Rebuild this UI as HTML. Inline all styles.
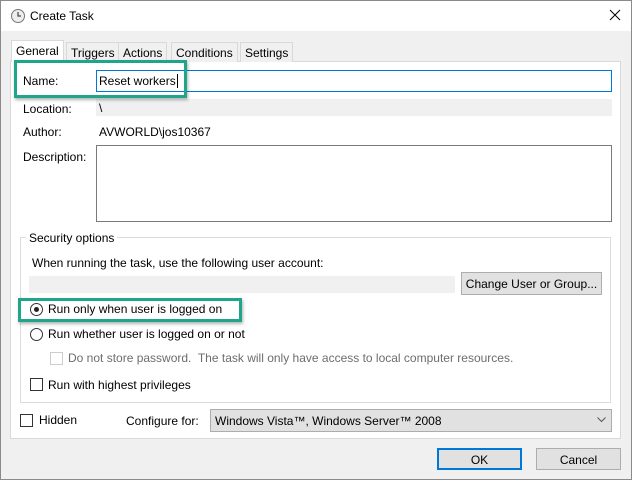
<!DOCTYPE html>
<html><head><style>
*{box-sizing:border-box;margin:0;padding:0}
body{width:632px;height:480px;overflow:hidden;font-family:"Liberation Sans",sans-serif;font-size:12px;color:#000;background:#f0f0f0;position:relative}
.a{position:absolute}
.win{left:0;top:0;width:632px;height:480px;border:1px solid #8a8a8a}
.title{left:1px;top:1px;width:630px;height:30px;background:#fff}
.panel{left:10px;top:61px;width:611px;height:378px;background:#fff;border:1px solid #d9d9d9}
.tab{top:42px;height:20px;border:1px solid #d9d9d9;border-bottom:none;background:#f0f0f0;padding:3px 4px 0;font-size:12px}
.btn{background:#e1e1e1;border:1px solid #adadad;text-align:center;font-size:12px}
.lbl{font-size:12px}
.radio{width:13px;height:13px;border:1px solid #333;border-radius:50%;background:#fff}
.chk{width:13px;height:13px;border:1px solid #333;background:#fff}
.green{border:3px solid #1fa58a;box-shadow:1px 2px 3px rgba(0,0,0,.3)}
</style></head><body>
<div class="a win"></div>
<div class="a title"></div>
<svg class="a" style="left:10px;top:8px" width="16" height="16" viewBox="0 0 16 16"><circle cx="8" cy="8" r="6.5" fill="#eee" stroke="#777"/><path d="M8 4V8H11" stroke="#444" stroke-width="1.2" fill="none"/></svg>
<div class="a" style="left:30px;top:9px;font-size:12px">Create Task</div>
<svg class="a" style="left:609px;top:9px" width="12" height="12"><path d="M1 1L11 11M11 1L1 11" stroke="#000" stroke-width="1"/></svg>

<div class="a panel"></div>
<div class="a tab" style="left:11px;top:40px;height:22px;background:#fff;border-color:#d9d9d9">General</div>
<div class="a tab" style="left:66px">Triggers</div>
<div class="a tab" style="left:118px">Actions</div>
<div class="a tab" style="left:171px">Conditions</div>
<div class="a tab" style="left:240px">Settings</div>
<div class="a" style="left:12px;top:61px;width:52px;height:2px;background:#fff"></div>

<div class="a lbl" style="left:23px;top:74px">Name:</div>
<div class="a" style="left:96px;top:70px;width:516px;height:22px;border:1px solid #0078d7;padding:3px 2px">Reset workers<span style="border-left:1px solid #000;margin-left:1px"></span></div>
<div class="a lbl" style="left:23px;top:102px">Location:</div>
<div class="a" style="left:96px;top:99px;width:516px;height:17px;background:#f0f0f0"></div>
<div class="a lbl" style="left:99px;top:101px">\</div>
<div class="a lbl" style="left:23px;top:125px">Author:</div>
<div class="a lbl" style="left:99px;top:125px">AVWORLD\jos10367</div>
<div class="a lbl" style="left:23px;top:150px">Description:</div>
<div class="a" style="left:96px;top:145px;width:516px;height:77px;border:1px solid #7a7a7a"></div>

<div class="a" style="left:20px;top:237px;width:591px;height:166px;border:1px solid #dcdcdc"></div>
<div class="a lbl" style="left:26px;top:231px;background:#fff;padding:0 3px">Security options</div>
<div class="a lbl" style="left:32px;top:256px">When running the task, use the following user account:</div>
<div class="a" style="left:29px;top:276px;width:426px;height:17px;background:#f0f0f0"></div>
<div class="a btn" style="left:461px;top:272px;width:141px;height:23px;padding-top:4px">Change User or Group...</div>

<div class="a radio" style="left:30px;top:303px"></div><div class="a" style="left:34px;top:307px;width:5px;height:5px;border-radius:50%;background:#222"></div>
<div class="a lbl" style="left:48px;top:302px">Run only when user is logged on</div>
<div class="a radio" style="left:30px;top:328px"></div>
<div class="a lbl" style="left:48px;top:327px">Run whether user is logged on or not</div>
<div class="a chk" style="left:50px;top:352px;border-color:#ccc"></div>
<div class="a lbl" style="left:68px;top:351px;color:#6d6d6d">Do not store password.&nbsp; The task will only have access to local computer resources.</div>
<div class="a chk" style="left:30px;top:378px"></div>
<div class="a lbl" style="left:48px;top:378px">Run with highest privileges</div>

<div class="a chk" style="left:20px;top:414px"></div>
<div class="a lbl" style="left:39px;top:413px">Hidden</div>
<div class="a lbl" style="left:126px;top:414px">Configure for:</div>
<div class="a" style="left:210px;top:409px;width:402px;height:23px;background:#e1e1e1;border:1px solid #adadad;padding:4px 4px">Windows Vista™, Windows Server™ 2008</div>
<svg class="a" style="left:597px;top:417px" width="9" height="6"><path d="M0.5 0.5L4.5 4.5L8.5 0.5" stroke="#555" fill="none"/></svg>

<div class="a btn" style="left:437px;top:448px;width:85px;height:22px;border:2px solid #0078d7;padding-top:3px">OK</div>
<div class="a btn" style="left:536px;top:448px;width:85px;height:22px;padding-top:4px">Cancel</div>

<div class="a green" style="left:14px;top:60px;width:173px;height:38px"></div>
<div class="a green" style="left:18px;top:298px;width:224px;height:24px"></div>
</body></html>
